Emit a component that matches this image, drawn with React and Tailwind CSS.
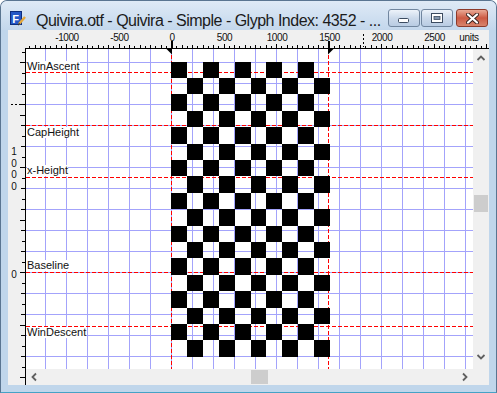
import React from "react";

const PX = 21 / 200; // pixels per font unit at this zoom
const SANS = '"Liberation Sans", Arial, sans-serif';

// canvas geometry, in canvas pixels
const CANVAS_W = 447;
const CANVAS_H = 320;
const ORIGIN_X = 145;
const ADVANCE_X = 302;
const BASELINE_Y = 223;
const GRID = "#a3a3fb";

const METRICS = [
  { name: "WinAscent", y: 23, top: 12 },
  { name: "CapHeight", y: 76, top: 78 },
  { name: "x-Height", y: 128, top: 116 },
  { name: "Baseline", y: 223, top: 211 },
  { name: "WinDescent", y: 277, top: 278 },
];

const vGrid = [];
for (let x = ORIGIN_X % 21; x < CANVAS_W; x += 21) vGrid.push(x);
const hGrid = [];
for (let y = BASELINE_Y % 21; y < CANVAS_H; y += 21) hGrid.push(y);

// the glyph: 10 x 18 checkerboard
const colX = i => Math.round(ORIGIN_X + i * 15.9);
const rowY = j => Math.round(12.7 + j * 16.39);
const cells = [];
for (let j = 0; j < 18; j++) {
  for (let i = 0; i < 10; i++) {
    if ((i + j) % 2 === 0) {
      cells.push({ x: colX(i), y: rowY(j), w: colX(i + 1) - colX(i), h: rowY(j + 1) - rowY(j) });
    }
  }
}

// rulers
const TOP_ORIGIN = 163;
const topTicks = [];
for (let u = -1600; u <= 3100; u += 50) {
  const x = Math.round(TOP_ORIGIN + u * PX);
  if (x < 18 || x > 480) continue;
  topTicks.push({ x, h: u % 500 === 0 ? 4 : u % 100 === 0 ? 3 : 2 });
}
const topLabels = [-1000, -500, 0, 500, 1000, 1500, 2000, 2500];

const leftTicks = [];
for (let u = -1200; u <= 2400; u += 100) {
  const y = Math.round(BASELINE_Y - u * PX);
  if (y < 1 || y > 335) continue;
  leftTicks.push({ y, w: u % 500 === 0 ? 5 : u % 200 === 0 ? 4 : 3 });
}

const TopRuler = () => (
  <svg width="481" height="19" className="block" style={{ fontFamily: SANS }}>
    <rect x="17" y="18" width="464" height="1" fill="#000" />
    {topTicks.map(t => (
      <rect key={t.x} x={t.x} y={18 - t.h} width="1" height={t.h} fill="#000" />
    ))}
    <rect x="163" y="11" width="2" height="7" fill="#000" />
    <rect x="320" y="11" width="2" height="7" fill="#000" />
    <line x1="355.5" y1="4" x2="355.5" y2="17" stroke="#000" strokeDasharray="2 2" />
    {topLabels.map(u => (
      <text key={u} x={TOP_ORIGIN + 1 + u * PX} y="11" fontSize="10" letterSpacing="-0.4" textAnchor="middle" fill="#111">
        {u}
      </text>
    ))}
    <text x="461" y="11" fontSize="10" letterSpacing="-0.3" textAnchor="middle" fill="#111">units</text>
  </svg>
);

const LeftRuler = () => (
  <svg width="18" height="336" className="block" style={{ fontFamily: SANS }}>
    <rect x="17" y="0" width="1" height="336" fill="#000" />
    {leftTicks.map(t => (
      <rect key={t.y} x={17 - t.w} y={t.y} width={t.w} height="1" fill="#000" />
    ))}
    <line x1="3" y1="55.5" x2="13" y2="55.5" stroke="#000" strokeDasharray="2 2" />
    {["1", "0", "0", "0"].map((d, i) => (
      <text key={i} x="6" y={[106, 118, 129, 141][i]} fontSize="10" textAnchor="middle" fill="#111">
        {d}
      </text>
    ))}
    <text x="6" y="229" fontSize="10" textAnchor="middle" fill="#111">0</text>
  </svg>
);

const GlyphCanvas = () => (
  <div className="relative h-[320px] w-[447px] overflow-hidden bg-white">
    <svg width={CANVAS_W} height={CANVAS_H} className="absolute left-0 top-0" shapeRendering="crispEdges">
      {vGrid.map(x => (
        <rect key={"v" + x} x={x} y="0" width="1" height={CANVAS_H} fill={GRID} />
      ))}
      {hGrid.map(y => (
        <rect key={"h" + y} x="0" y={y} width={CANVAS_W} height="1" fill={GRID} />
      ))}
      {METRICS.map(m => (
        <line key={m.name} x1="0" y1={m.y + 0.5} x2={CANVAS_W} y2={m.y + 0.5} stroke="#ff0000" strokeDasharray="4 2" />
      ))}
      <line x1={ORIGIN_X + 0.5} y1="0" x2={ORIGIN_X + 0.5} y2={CANVAS_H} stroke="#ff0000" strokeDasharray="4 2" />
      <line x1={ADVANCE_X + 0.5} y1="0" x2={ADVANCE_X + 0.5} y2={CANVAS_H} stroke="#ff0000" strokeDasharray="4 2" />
      {cells.map((c, k) => (
        <rect key={k} x={c.x} y={c.y} width={c.w} height={c.h} fill="#000" />
      ))}
    </svg>
    <svg width={CANVAS_W} height="8" className="absolute left-0 top-0">
      <polygon points="140.5,0 146,0 146,5.5" fill="#000" />
      <polygon points="302,0 307.5,0 302,5.5" fill="#000" />
    </svg>
    {METRICS.map(m => (
      <span
        key={m.name}
        className="absolute left-[1px] bg-white text-[11px] leading-[11px] text-[#111]"
        style={{ top: m.top, fontFamily: SANS }}
      >
        {m.name}
      </span>
    ))}
  </div>
);

const Chevron = ({ d }) => (
  <svg width="14" height="14" viewBox="0 0 14 14" className="block">
    <path d={d} fill="none" stroke="#606060" strokeWidth="1.8" />
  </svg>
);

const VScroll = () => (
  <div className="flex h-[320px] w-[16px] flex-col items-center bg-[#f0f0f0]">
    <div className="mt-[2px]">
      <Chevron d="M3.5 9 L7 5.5 L10.5 9" />
    </div>
    <div className="mt-[130px] h-[17px] w-[14px] bg-[#cdcdcd]" />
    <div className="mt-[138px]">
      <Chevron d="M3.5 5 L7 8.5 L10.5 5" />
    </div>
  </div>
);

const HScroll = () => (
  <div className="flex h-[16px] w-[447px] items-center bg-[#f0f0f0]">
    <div className="ml-[1px]">
      <Chevron d="M9 3.5 L5.5 7 L9 10.5" />
    </div>
    <div className="ml-[210px] h-[14px] w-[17px] bg-[#cdcdcd]" />
    <div className="ml-[190px]">
      <Chevron d="M5 3.5 L8.5 7 L5 10.5" />
    </div>
  </div>
);

const AppIcon = () => (
  <svg width="16" height="16" viewBox="0 0 16 16" className="block">
    <rect x="0.5" y="1.5" width="11" height="13" fill="#2458c6" stroke="#0d2d7c" />
    <text x="2.2" y="12.5" fontSize="11" fontWeight="bold" fill="#fff" style={{ fontFamily: SANS }}>F</text>
    <path d="M9 14 L15 7" stroke="#e6a93c" strokeWidth="2.4" />
    <path d="M8.2 15.2 L9.6 13.4" stroke="#333" strokeWidth="1.2" />
  </svg>
);

const CaptionButton = ({ kind }) => {
  const close = kind === "close";
  return (
    <div
      className={
        close
          ? "flex h-[18px] w-[32px] items-center justify-center rounded-[3px] border border-[#8d3a2a] bg-linear-to-b from-[#e9a996] via-[#cc5a44] to-[#d8846c]"
          : "flex h-[18px] w-[32px] items-center justify-center rounded-[3px] border border-[#71869f] bg-linear-to-b from-[#edf3fa] via-[#ccdaeb] to-[#b9cce3]"
      }
    >
      {kind === "min" && (
        <svg width="12" height="6" className="mt-[6px]">
          <rect x="0.5" y="0.5" width="10" height="4" rx="1" fill="#fff" stroke="#3b4b60" />
        </svg>
      )}
      {kind === "max" && (
        <svg width="12" height="10">
          <rect x="0.5" y="0.5" width="11" height="9" fill="#fff" stroke="#3b4b60" />
          <rect x="3" y="3.5" width="6" height="3" fill="#8295ad" stroke="#3b4b60" strokeWidth="0.8" />
        </svg>
      )}
      {close && (
        <svg width="13" height="11">
          <path d="M2 1.5 L11 9.5 M11 1.5 L2 9.5" stroke="#3a2320" strokeWidth="4" strokeLinecap="round" />
          <path d="M2 1.5 L11 9.5 M11 1.5 L2 9.5" stroke="#fff" strokeWidth="2.2" strokeLinecap="round" />
        </svg>
      )}
    </div>
  );
};

export default function App() {
  return (
    <div className="flex h-[393px] w-[497px] flex-col overflow-hidden rounded-t-[7px] border border-[#5a7591] border-b-[#46a2c6] bg-[#c0d6eb]">
      {/* title bar */}
      <div className="flex h-[29px] items-start bg-linear-to-b from-[#dfeaf6] to-[#c3d7ec] pl-[9px] pr-[8px]">
        <div className="mt-[9px]">
          <AppIcon />
        </div>
        <div
          className="ml-[10px] mt-[10px] whitespace-nowrap text-[16px] leading-[20px] tracking-[-0.5px] text-[#1b1b1b]"
          style={{ fontFamily: SANS }}
        >
          Quivira.otf - Quivira - Simple - Glyph Index: 4352 - ...
        </div>
        <div className="ml-auto mt-[8px] flex gap-[1px]">
          <CaptionButton kind="min" />
          <CaptionButton kind="max" />
          <div className="ml-[2px]">
            <CaptionButton kind="close" />
          </div>
        </div>
      </div>

      <div className="flex h-[355px]">
        <div className="w-[7px]" />
        {/* client area */}
        <div className="flex w-[481px] flex-col bg-[#f0f0f0]">
          <TopRuler />
          <div className="flex h-[336px]">
            <LeftRuler />
            <div className="flex flex-col">
              <GlyphCanvas />
              <HScroll />
            </div>
            <div className="flex flex-col">
              <VScroll />
              <div className="h-[16px] w-[16px] bg-[#f0f0f0]" />
            </div>
          </div>
        </div>
        <div className="w-[7px]" />
      </div>
      <div className="h-[7px]" />
    </div>
  );
}
